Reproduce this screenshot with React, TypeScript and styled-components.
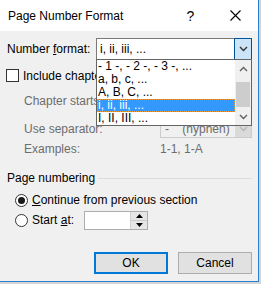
import React from 'react'
import styled, { createGlobalStyle } from 'styled-components'

const GlobalStyle = createGlobalStyle`
  html, body {
    margin: 0;
    padding: 0;
    background: #d4d4d4;
  }
  body {
    font-family: "Liberation Sans", Arial, sans-serif;
    font-size: 12px;
    color: #000;
  }
`

const Dialog = styled.div`
  width: 258px;
  height: 281px;
  border-right: 1px solid #2a7fd4;
  border-bottom: 1px solid #2a7fd4;
  background: #f0f0f0;
  display: flex;
  flex-direction: column;
`

const TitleBar = styled.div`
  height: 31px;
  flex: none;
  background: #fff;
  display: flex;
  align-items: center;
  padding-left: 8px;
`

const Title = styled.div`
  flex: 1;
  font-size: 12px;
`

const CaptionButton = styled.div`
  width: 45px;
  height: 31px;
  display: flex;
  align-items: center;
  justify-content: center;
  font-size: 14px;
`

const Body = styled.div`
  padding: 7px 6px 0 7px;
  display: flex;
  flex-direction: column;
`

const Row = styled.div<{ $h: number; $top: number; $indent?: number }>`
  display: flex;
  align-items: center;
  height: ${(p) => p.$h}px;
  margin-top: ${(p) => p.$top}px;
  padding-left: ${(p) => p.$indent ?? 0}px;
  line-height: 16px;
  white-space: nowrap;
`

const Label = styled.span<{ $w?: number; $disabled?: boolean }>`
  width: ${(p) => (p.$w ? `${p.$w}px` : 'auto')};
  flex: none;
  color: ${(p) => (p.$disabled ? '#6d6d6d' : '#000')};
`

const Combo = styled.div`
  position: relative;
  width: 156px;
  height: 22px;
  display: flex;
`

const Field = styled.div`
  flex: 1;
  border: 1px solid #7a7a7a;
  border-right: none;
  background: #fff;
  display: flex;
  align-items: center;
  padding-left: 3px;
`

const DropButton = styled.div`
  width: 16px;
  border: 1px solid #005499;
  background: #cce4f7;
  display: flex;
  align-items: center;
  justify-content: center;
`

const DropList = styled.div`
  position: absolute;
  left: 0;
  top: 21px;
  width: 156px;
  height: 67px;
  box-sizing: border-box;
  border: 1px solid #646464;
  background: #fff;
  display: flex;
  z-index: 2;
`

const Items = styled.div`
  flex: 1;
  display: flex;
  flex-direction: column;
`

const Item = styled.div<{ $selected?: boolean }>`
  height: 13px;
  line-height: 13px;
  padding-left: 1px;
  box-sizing: border-box;
  background: ${(p) => (p.$selected ? '#3399ff' : 'transparent')};
  color: ${(p) => (p.$selected ? '#fff' : '#000')};
  outline: ${(p) => (p.$selected ? '1px dotted #e89a3c' : 'none')};
  outline-offset: -1px;
`

const ScrollBar = styled.div`
  width: 16px;
  background: #f0f0f0;
  display: flex;
  flex-direction: column;
`

const ScrollArrow = styled.div`
  height: 17px;
  display: flex;
  align-items: center;
  justify-content: center;
`

const Thumb = styled.div`
  margin: 5px 1px 1px;
  height: 25px;
  background: #cdcdcd;
`

const DisabledCombo = styled.div`
  width: 92px;
  height: 18px;
  box-sizing: border-box;
  border: 1px solid #cccccc;
  background: #f0f0f0;
  display: flex;
  color: #6d6d6d;
`

const DisabledText = styled.div`
  flex: 1;
  padding-left: 4px;
  display: flex;
  align-items: center;
`

const DisabledButton = styled.div`
  width: 16px;
  background: #dadada;
  display: flex;
  align-items: center;
  justify-content: center;
`

const CheckBox = styled.span`
  width: 13px;
  height: 13px;
  box-sizing: border-box;
  border: 1px solid #333;
  background: #fff;
  margin-left: -1px;
  margin-right: 4px;
  flex: none;
`

const GroupRule = styled.div`
  flex: 1;
  height: 1px;
  background: #dcdcdc;
  margin-left: 3px;
`

const Radio = styled.span<{ $checked?: boolean }>`
  width: 13px;
  height: 13px;
  box-sizing: border-box;
  border-radius: 50%;
  border: 1px solid #333;
  background: #fff;
  margin: 0 4px 0 8px;
  flex: none;
  display: flex;
  align-items: center;
  justify-content: center;

  &::after {
    content: '';
    display: ${(p) => (p.$checked ? 'block' : 'none')};
    width: 7px;
    height: 7px;
    border-radius: 50%;
    background: #1a1a1a;
  }
`

const Spin = styled.div`
  width: 64px;
  height: 19px;
  box-sizing: border-box;
  border: 1px solid #adadad;
  background: #fff;
  display: flex;
`

const SpinButtons = styled.div`
  width: 16px;
  margin-left: auto;
  display: flex;
  flex-direction: column;
  border-left: 1px solid #d0d0d0;
`

const SpinButton = styled.div`
  flex: 1;
  background: #e6e6e6;
  display: flex;
  align-items: center;
  justify-content: center;

  & + & {
    border-top: 1px solid #c8c8c8;
  }
`

const Buttons = styled.div`
  display: flex;
  justify-content: flex-end;
  gap: 10px;
  margin-top: 22px;
`

const Button = styled.div<{ $default?: boolean }>`
  width: 74px;
  height: 22px;
  box-sizing: border-box;
  background: #e1e1e1;
  border: ${(p) => (p.$default ? '2px solid #0078d7' : '1px solid #adadad')};
  display: flex;
  align-items: center;
  justify-content: center;
`

const Chevron = ({ up, color = '#555' }: { up?: boolean; color?: string }) => (
  <svg width="9" height="6" viewBox="0 0 9 6">
    <polyline
      points={up ? '1,5 4.5,1.5 8,5' : '1,1 4.5,4.5 8,1'}
      fill="none"
      stroke={color}
      strokeWidth="1.4"
    />
  </svg>
)

const Tri = ({ up }: { up?: boolean }) => (
  <svg width="7" height="4" viewBox="0 0 7 4">
    <polygon points={up ? '0,4 3.5,0 7,4' : '0,0 3.5,4 7,0'} fill="#000" />
  </svg>
)

const formats = ['- 1 -, - 2 -, - 3 -, ...', 'a, b, c, ...', 'A, B, C, ...', 'i, ii, iii, ...', 'I, II, III, ...']

export default function App() {
  return (
    <>
      <GlobalStyle />
      <Dialog>
        <TitleBar>
          <Title>Page Number Format</Title>
          <CaptionButton>?</CaptionButton>
          <CaptionButton>
            <svg width="11" height="11" viewBox="0 0 11 11">
              <path d="M0.5 0.5 L10.5 10.5 M10.5 0.5 L0.5 10.5" stroke="#000" strokeWidth="1.1" />
            </svg>
          </CaptionButton>
        </TitleBar>
        <Body>
          <Row $h={22} $top={0}>
            <Label $w={89}>
              Number <u>f</u>ormat:
            </Label>
            <Combo>
              <Field>i, ii, iii, ...</Field>
              <DropButton>
                <Chevron color="#333" />
              </DropButton>
              <DropList>
                <Items>
                  {formats.map((f) => (
                    <Item key={f} $selected={f === 'i, ii, iii, ...'}>
                      {f}
                    </Item>
                  ))}
                </Items>
                <ScrollBar>
                  <ScrollArrow>
                    <Chevron up color="#606060" />
                  </ScrollArrow>
                  <Thumb />
                  <ScrollArrow>
                    <Chevron color="#606060" />
                  </ScrollArrow>
                </ScrollBar>
              </DropList>
            </Combo>
          </Row>
          <Row $h={13} $top={9}>
            <CheckBox />
            <Label>
            Include chapter <u>n</u>umber
            </Label>
          </Row>
          <Row $h={16} $top={11} $indent={17}>
            <Label $disabled>Chapter starts with style:</Label>
          </Row>
          <Row $h={18} $top={11} $indent={17}>
            <Label $w={136} $disabled>
              Use separator:
            </Label>
            <DisabledCombo>
              <DisabledText>-&nbsp;&nbsp;&nbsp;&nbsp;(hyphen)</DisabledText>
              <DisabledButton>
                <Chevron color="#b5b5b5" />
              </DisabledButton>
            </DisabledCombo>
          </Row>
          <Row $h={15} $top={3} $indent={17}>
            <Label $w={136} $disabled>
              Examples:
            </Label>
            <Label $disabled>1-1, 1-A</Label>
          </Row>
          <Row $h={16} $top={14}>
            <Label>Page numbering</Label>
            <GroupRule />
          </Row>
          <Row $h={16} $top={6}>
            <Radio $checked />
            <Label>
              <u>C</u>ontinue from previous section
            </Label>
          </Row>
          <Row $h={20} $top={2}>
            <Radio />
            <Label $w={52}>
              Start <u>a</u>t:
            </Label>
            <Spin>
              <SpinButtons>
                <SpinButton>
                  <Tri up />
                </SpinButton>
                <SpinButton>
                  <Tri />
                </SpinButton>
              </SpinButtons>
            </Spin>
          </Row>
          <Buttons>
            <Button $default>OK</Button>
            <Button>Cancel</Button>
          </Buttons>
        </Body>
      </Dialog>
    </>
  )
}
